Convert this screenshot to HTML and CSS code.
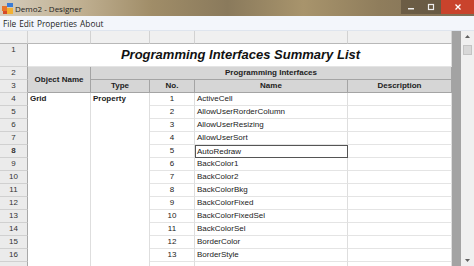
FILE: index.html
```html
<!DOCTYPE html>
<html lang="en">
<head>
    <meta charset="UTF-8">
    <title>Demo2 - Designer</title>
    <link rel="stylesheet" href="styles.css">
</head>
<body>

    <div class="window">
        <div class="titlebar">
            <svg class="app-icon" width="11" height="11" viewBox="0 0 11 11">
                <rect x="0" y="3" width="5" height="5" fill="#e8742a"/>
                <rect x="5" y="0" width="6" height="4" fill="#3a7bd5"/>
                <rect x="5" y="5" width="6" height="6" fill="#f2b134"/>
                <rect x="1" y="8" width="4" height="3" fill="#d64a2a"/>
            </svg>
            <span class="title">Demo2 - Designer</span>
            <div class="win-buttons">
                <div class="win-btn">
                    <svg width="8" height="8" viewBox="0 0 8 8"><rect x="1" y="5" width="6" height="1.5" fill="#eee"/></svg>
                </div>
                <div class="win-btn">
                    <svg width="8" height="8" viewBox="0 0 8 8"><rect x="1.5" y="1.5" width="5" height="5" fill="none" stroke="#eee" stroke-width="1.2"/></svg>
                </div>
                <div class="win-btn close">
                    <svg width="8" height="8" viewBox="0 0 8 8"><path d="M1.5 1.5 L6.5 6.5 M6.5 1.5 L1.5 6.5" stroke="#fff" stroke-width="1.3"/></svg>
                </div>
            </div>
        </div>

        <div class="menubar">
            <span>File</span>
            <span>Edit</span>
            <span>Properties</span>
            <span>About</span>
        </div>

        <div class="workspace">
            <div class="sheet" id="sheet">
                <div class="corner"></div>
                <div class="colhead"></div>
                <div class="colhead"></div>
                <div class="colhead"></div>
                <div class="colhead"></div>
                <div class="colhead"></div>

                <div class="rowhead">1</div>
                <div class="cell title-cell">Programming Interfaces Summary List</div>

                <div class="rowhead">2</div>
                <div class="cell hdr obj-name">Object Name</div>
                <div class="cell hdr group">Programming Interfaces</div>

                <div class="rowhead">3</div>
                <div class="cell hdr">Type</div>
                <div class="cell hdr">No.</div>
                <div class="cell hdr">Name</div>
                <div class="cell hdr">Description</div>

                <div class="rowhead">4</div>
                <div class="cell merged bold">Grid</div>
                <div class="cell merged bold">Property</div>
                <!-- remaining rows are filled by the script -->
            </div>
            <div class="filler"></div>
            <div class="scrollbar">
                <svg class="arrow" width="7" height="5" viewBox="0 0 7 5"><path d="M3.5 1 L6 4 L1 4 Z" fill="#606060"/></svg>
                <div class="thumb"></div>
                <div class="track"></div>
                <svg class="arrow" width="7" height="5" viewBox="0 0 7 5"><path d="M1 1 L6 1 L3.5 4 Z" fill="#606060"/></svg>
            </div>
        </div>
    </div>

    <script>
        const names = [
            "ActiveCell", "AllowUserRorderColumn", "AllowUserResizing", "AllowUserSort",
            "AutoRedraw", "BackColor1", "BackColor2", "BackColorBkg", "BackColorFixed",
            "BackColorFixedSel", "BackColorSel", "BorderColor", "BorderStyle", ""
        ];
        const sheet = document.getElementById("sheet");

        names.forEach((name, i) => {
            const row = i + 4;
            // last row is only a sliver at the bottom edge, keep it empty
            const sliver = name === "";
            if (row > 4) {
                let head = document.createElement("div");
                head.className = "rowhead";
                if (row === 8) head.classList.add("current");
                head.textContent = sliver ? "" : row;
                sheet.appendChild(head);
            }
            let no = document.createElement("div");
            no.className = "cell num";
            no.textContent = sliver ? "" : i + 1;
            sheet.appendChild(no);

            let nameCell = document.createElement("div");
            nameCell.className = "cell";
            if (row === 8) nameCell.classList.add("selected");
            nameCell.textContent = name;
            sheet.appendChild(nameCell);

            let desc = document.createElement("div");
            desc.className = "cell";
            sheet.appendChild(desc);
        });
    </script>
</body>
</html>
```

FILE: styles.css
```css
body {
    margin: 0;
    padding: 0;
    font-family: "Liberation Sans", Arial, sans-serif;
    background-color: #ffffff;
    overflow: hidden;
}

.window {
    width: 474px;
    height: 266px;
    display: flex;
    flex-direction: column;
    overflow: hidden;
}

.titlebar {
    height: 16px;
    display: flex;
    align-items: center;
    padding-left: 2px;
    background: linear-gradient(90deg, #d4ccbc 0%, #c2b294 16%, #a08d68 32%, #8a7a5c 48%, #a8946c 64%, #8f7d5c 80%, #7d6d55 100%);
}

.app-icon {
    margin-right: 2px;
}

.title {
    font-family: "Open Sans", sans-serif;
    font-size: 8px;
    color: #1e1e1e;
}

.win-buttons {
    margin-left: auto;
    display: flex;
    align-self: flex-start;
    height: 14px;
}

.win-btn {
    width: 20px;
    display: flex;
    align-items: center;
    justify-content: center;
    background-color: rgba(70, 60, 45, 0.45);
}

.win-btn.close {
    width: 33px;
    background-color: #c9432c;
}

.menubar {
    height: 14px;
    display: flex;
    align-items: center;
    gap: 3px;
    padding-left: 3px;
    background-color: #f3f6fb;
    border-bottom: 1px solid #dfe5ee;
    font-family: "Open Sans", sans-serif;
    font-size: 8.3px;
    color: #1e1e1e;
}

.workspace {
    flex: 1;
    display: flex;
    overflow: hidden;
}

.sheet {
    width: 452px;
    display: grid;
    grid-template-columns: 28px 63px 59px 45px 153px 104px;
    grid-template-rows: 13px 23px 13px 13px;
    grid-auto-rows: 13px;
    font-size: 8px;
    color: #222;
    align-content: start;
}

.sheet > div {
    box-sizing: border-box;
    border-right: 1px solid #dedede;
    border-bottom: 1px solid #e4e4e4;
    overflow: hidden;
    white-space: nowrap;
}

.corner,
.colhead {
    background-color: #f0f0f0;
}

.sheet > .corner,
.sheet > .colhead {
    border-right-color: #d2d2d2;
    border-bottom-color: #b8b8b8;
}

.rowhead {
    background-color: #ebebeb;
    text-align: center;
    line-height: 12px;
    color: #333;
}

.sheet > .rowhead {
    border-right-color: #a8a8a8;
    border-bottom-color: #d0d0d0;
}

.rowhead.current {
    font-weight: bold;
}

.cell {
    line-height: 12px;
    padding-left: 2px;
}

.title-cell {
    grid-column: span 5;
    text-align: center;
    font-size: 13px;
    font-weight: bold;
    font-style: italic;
    line-height: 22px;
    color: #111;
}

.sheet > .hdr {
    background-color: #d6d6d6;
    border-right-color: #a4a4a4;
    border-bottom-color: #a4a4a4;
    text-align: center;
    font-weight: bold;
    padding-left: 0;
}

.obj-name {
    grid-row: span 2;
    display: flex;
    align-items: center;
    justify-content: center;
}

.group {
    grid-column: span 4;
}

.merged {
    grid-row: span 14;
}

.sheet > .merged {
    border-bottom: none;
}

.bold {
    font-weight: bold;
}

.num {
    text-align: center;
    padding-left: 0;
}

.sheet > .selected {
    border: 1px solid #555;
    line-height: 11px;
    padding-left: 1px;
}

.filler {
    width: 9px;
    background-color: #a3a3a3;
}

.scrollbar {
    width: 13px;
    background-color: #f0f0f0;
    display: flex;
    flex-direction: column;
    align-items: center;
    padding: 3px 0 3px;
}

.arrow {
    flex: none;
}

.thumb {
    width: 7px;
    height: 8px;
    margin-top: 6px;
    background-color: #d8d8d8;
    border: 1px solid #c4c4c4;
}

.track {
    flex: 1;
}
```
